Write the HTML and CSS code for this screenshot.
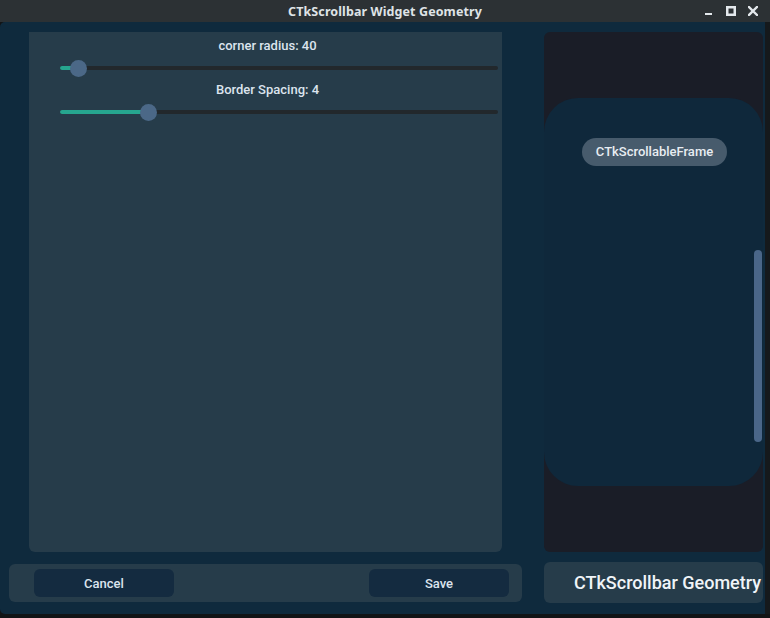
FILE: index.html
```html
<!DOCTYPE html>
<html>
<head>
<meta charset="utf-8">
<link rel="stylesheet" href="styles.css">
</head>
<body>
<div class="screen">
  <div class="titlebar">
    <span class="title">CTkScrollbar Widget Geometry</span>
    <div class="controls">
      <svg class="ctl" width="10" height="10" viewBox="0 0 10 10"><rect x="1" y="7" width="7" height="2" fill="#e3e8ec"/></svg>
      <svg class="ctl" width="10" height="10" viewBox="0 0 10 10"><rect x="1.25" y="1.25" width="7.5" height="7.5" fill="none" stroke="#e3e8ec" stroke-width="2.5"/></svg>
      <svg class="ctl" width="10" height="10" viewBox="0 0 10 10"><path d="M1 1 L9 9 M9 1 L1 9" stroke="#e3e8ec" stroke-width="2.4" stroke-linecap="square"/></svg>
    </div>
  </div>
  <div class="lower">
    <div class="window">
      <div class="settings">
        <div class="label">corner radius: 40</div>
        <div class="slider">
          <div class="track"><div class="fill" style="width:19px"></div></div>
          <div class="knob" style="left:10px"></div>
        </div>
        <div class="label">Border Spacing: 4</div>
        <div class="slider">
          <div class="track"><div class="fill" style="width:89px"></div></div>
          <div class="knob" style="left:80px"></div>
        </div>
      </div>
      <div class="preview">
        <div class="frame">
          <div class="pill">CTkScrollableFrame</div>
          <div class="scrollbar"></div>
        </div>
      </div>
      <div class="actions">
        <button class="btn">Cancel</button>
        <button class="btn">Save</button>
      </div>
      <div class="caption">CTkScrollbar Geometry</div>
    </div>
    <div class="edge"></div>
  </div>
</div>
</body>
</html>
```
FILE: styles.css
```css
html, body {
  margin: 0;
  padding: 0;
  background: #121416;
  width: 770px;
  height: 618px;
  overflow: hidden;
}
.screen {
  width: 770px;
  height: 618px;
  display: flex;
  flex-direction: column;
}
.titlebar {
  height: 22px;
  background: #2c3134;
  position: relative;
  display: flex;
  align-items: center;
  justify-content: center;
}
.title {
  font-family: "Noto Sans", "DejaVu Sans", sans-serif;
  font-weight: bold;
  font-size: 12.5px;
  color: #dfe3e6;
  letter-spacing: 0.1px;
}
.controls {
  position: absolute;
  right: 12px;
  top: 6px;
  display: flex;
  gap: 12px;
}
.ctl { display: block; }
.lower {
  display: flex;
  height: 592px;
}
.window {
  width: 765px;
  height: 592px;
  background: #0f2a3d;
  border-radius: 5px 0 0 5px;
  box-sizing: border-box;
  padding: 10px 2px 0 9px;
  display: grid;
  grid-template-columns: 513px 219px;
  grid-template-rows: 520px 41px;
  column-gap: 22px;
  row-gap: 10px;
  font-family: Roboto, "Liberation Sans", sans-serif;
  color: #dce4ee;
}
.edge {
  width: 5px;
  background: #15191c;
}
.settings {
  margin: 0 20px;
  background: #263c4a;
  border-radius: 0 0 6px 6px;
  display: flex;
  flex-direction: column;
}
.label {
  height: 28px;
  line-height: 28px;
  text-align: center;
  font-size: 13px;
  font-weight: 500;
  padding-left: 4px;
}
.slider {
  position: relative;
  height: 16px;
  margin-left: 31px;
  width: 438px;
}
.track {
  margin-top: 6px;
  height: 4px;
  border-radius: 2px;
  background: #22282c;
  overflow: hidden;
}
.fill {
  height: 4px;
  background: #26a68f;
}
.knob {
  position: absolute;
  top: -0.5px;
  width: 17px;
  height: 17px;
  border-radius: 50%;
  background: #4b6887;
}
.preview {
  background: #1a1d27;
  border-radius: 6px;
  padding-top: 66px;
}
.frame {
  position: relative;
  height: 388px;
  background: #0f283b;
  border-radius: 34px;
  display: flex;
  flex-direction: column;
  align-items: center;
}
.pill {
  margin-top: 40px;
  margin-left: 2px;
  height: 28px;
  line-height: 28px;
  padding: 0 14px;
  border-radius: 14px;
  background: #475b6c;
  font-size: 13px;
  font-weight: 500;
  color: #e8edf2;
}
.scrollbar {
  position: absolute;
  right: 1px;
  top: 152px;
  width: 8px;
  height: 192px;
  border-radius: 4px;
  background: #4a6688;
}
.actions {
  margin-top: 2px;
  height: 38px;
  background: #263c4a;
  border-radius: 6px;
  box-sizing: border-box;
  padding: 5px 13px 5px 25px;
  display: flex;
  justify-content: space-between;
}
.btn {
  width: 140px;
  height: 28px;
  border: none;
  border-radius: 6px;
  background: #142b40;
  color: #dce4ee;
  font-family: Roboto, "Liberation Sans", sans-serif;
  font-size: 13px;
  font-weight: 500;
  padding: 0;
}
.caption {
  background: #263c4a;
  border-radius: 6px;
  padding-left: 30px;
  white-space: nowrap;
  font-size: 18px;
  font-weight: 500;
  line-height: 41px;
  color: #f0f4f8;
}
```
